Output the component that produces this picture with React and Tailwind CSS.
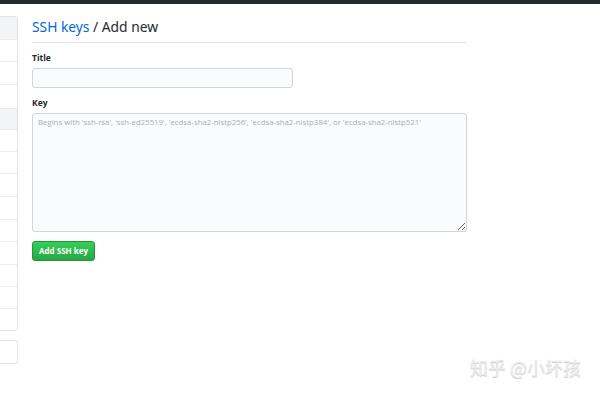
import React from 'react'

const font = { fontFamily: '"Open Sans", "Noto Sans", "Noto Sans CJK SC", sans-serif' }

// sidebar rows: gray rows are the header and the selected item
const ROWS = [
  { h: 'h-[22px]', gray: true },
  { h: 'h-[22px]' },
  { h: 'h-[23px]' },
  { h: 'h-[24px]' },
  { h: 'h-[21px]', gray: true },
  { h: 'h-[22px]' },
  { h: 'h-[22px]' },
  { h: 'h-[23px]' },
  { h: 'h-[23px]' },
  { h: 'h-[22px]' },
  { h: 'h-[23px]' },
  { h: 'h-[22px]' },
  { h: 'h-[22px]' },
  { h: 'h-[22px]' },
]

export default function App() {
  return (
    <div className="w-[600px] h-[393px] bg-white overflow-hidden relative" style={font}>
      {/* top header bar */}
      <div className="h-[4px] bg-[#24292e]" />

      <div className="flex">
        {/* sidebar menu, cropped at the left edge */}
        <div className="w-[18px] shrink-0 pt-[12px]">
          <div className="border border-l-0 border-[#e1e4e8] rounded-r-[3px] overflow-hidden">
            {ROWS.map((r, i) => (
              <div key={i} className={`${r.h} ${r.gray ? 'bg-[#f3f4f6]' : 'bg-white'} ${i > 0 ? 'border-t border-[#eaecef]' : ''}`} />
            ))}
          </div>
          <div className="mt-[9px] h-[24px] border border-l-0 border-[#e1e4e8] rounded-r-[3px]" />
        </div>

        {/* main form */}
        <div className="ml-[14px] w-[435px] pt-[13px]">
          <div className="pb-[5px] border-b border-[#e1e4e8]">
            <h2 className="text-[13.8px] leading-[20px] font-normal text-[#24292e]" style={{ fontFamily: '"Noto Sans", sans-serif' }}>
              <span className="text-[#0366d6]">SSH keys</span> / Add new
            </h2>
          </div>

          <div className="mt-[9px]">
            <label className="block text-[8.5px] leading-[11px] font-bold text-[#24292e]">Title</label>
            <input className="mt-[5px] block w-[261px] h-[20px] bg-[#fafbfc] border border-[#d1d5da] rounded-[3px] outline-none" />
          </div>

          <div className="mt-[9px]">
            <label className="block text-[8.5px] leading-[11px] font-bold text-[#24292e]">Key</label>
            <textarea
              className="mt-[5px] block w-[435px] h-[119px] bg-[#fafbfc] border border-[#d1d5da] rounded-[3px] px-[5px] py-[3px] text-[7.8px] leading-[10px] text-[#24292e] placeholder:text-[#a8aeb5] outline-none resize-y"
              placeholder="Begins with 'ssh-rsa', 'ssh-ed25519', 'ecdsa-sha2-nistp256', 'ecdsa-sha2-nistp384', or 'ecdsa-sha2-nistp521'"
            />
          </div>

          <button className="mt-[9px] h-[20px] w-[63px] rounded-[3px] bg-gradient-to-b from-[#34d058] to-[#28a745] border border-[#23923d] text-white text-[8px] font-bold leading-none">
            Add SSH key
          </button>
        </div>
      </div>

      {/* watermark */}
      <div className="absolute left-[470px] top-[355px] text-[18px] leading-[24px] text-[#ececec] [text-shadow:0_1px_1px_rgba(0,0,0,0.22)]"
        style={{ fontFamily: '"Noto Sans CJK SC", sans-serif' }}>
        知乎 @小坏孩
      </div>
    </div>
  )
}
